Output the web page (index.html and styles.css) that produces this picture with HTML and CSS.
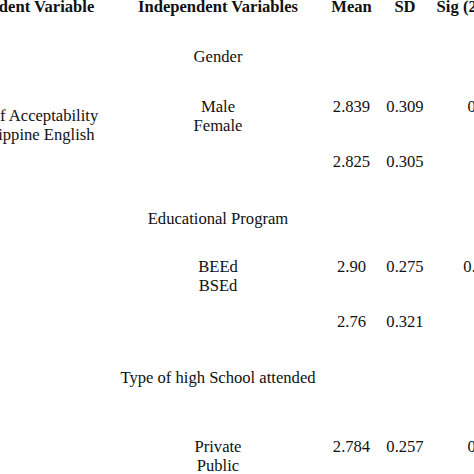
FILE: index.html
```html
<!DOCTYPE html>
<html>
<head>
<meta charset="utf-8">
<link rel="stylesheet" href="styles.css">
</head>
<body>
<div class="table">
  <div class="cell head">Dependent Variable</div>
  <div class="cell head">Independent Variables</div>
  <div class="cell head">Mean</div>
  <div class="cell head">SD</div>
  <div class="cell head">Sig (2-tailed)</div>

  <div class="cell"></div>
  <div class="cell">Gender</div>
  <div class="cell"></div>
  <div class="cell"></div>
  <div class="cell"></div>

  <div class="cell dep">Level of Acceptability<br>of Philippine English</div>
  <div class="cell">Male<br>Female</div>
  <div class="cell">2.839</div>
  <div class="cell">0.309</div>
  <div class="cell">0.68</div>

  <div class="cell"></div>
  <div class="cell"></div>
  <div class="cell">2.825</div>
  <div class="cell">0.305</div>
  <div class="cell"></div>

  <div class="cell"></div>
  <div class="cell">Educational Program</div>
  <div class="cell"></div>
  <div class="cell"></div>
  <div class="cell"></div>

  <div class="cell"></div>
  <div class="cell">BEEd<br>BSEd</div>
  <div class="cell">2.90</div>
  <div class="cell">0.275</div>
  <div class="cell">0.003</div>

  <div class="cell"></div>
  <div class="cell"></div>
  <div class="cell">2.76</div>
  <div class="cell">0.321</div>
  <div class="cell"></div>

  <div class="cell"></div>
  <div class="cell">Type of high School attended</div>
  <div class="cell"></div>
  <div class="cell"></div>
  <div class="cell"></div>

  <div class="cell"></div>
  <div class="cell">Private<br>Public</div>
  <div class="cell">2.784</div>
  <div class="cell">0.257</div>
  <div class="cell">0.56</div>
</div>
</body>
</html>
```

FILE: styles.css
```css
html, body {
  margin: 0;
  padding: 0;
  background: #ffffff;
  overflow: hidden;
  width: 474px;
  height: 474px;
}

.table {
  display: grid;
  grid-template-columns: 174px 214px 53px 54px 100px;
  grid-template-rows: 50px 49.5px 55.5px 57px 47.5px 55.5px 56px 68.5px 40px;
  margin-left: -63px;
  margin-top: -3px;
  font-family: "Liberation Serif", "Times New Roman", serif;
  font-size: 16.6px;
  line-height: 19px;
  color: #111111;
}

.cell {
  text-align: center;
  white-space: nowrap;
}

.head {
  font-weight: bold;
}

.dep {
  padding-top: 9px;
}
```
